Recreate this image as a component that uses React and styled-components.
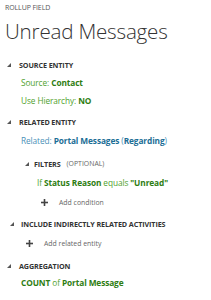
import React from "react";
import styled, { createGlobalStyle } from "styled-components";

const GlobalStyle = createGlobalStyle`
  body {
    margin: 0;
    background: #ffffff;
    font-family: "Open Sans", "Noto Sans", sans-serif;
  }
`;

const Page = styled.div`
  width: 211px;
  height: 300px;
  overflow: hidden;
  padding: 3px 0 0 5px;
  box-sizing: border-box;
`;

const Caption = styled.div`
  font-size: 7px;
  color: #555555;
  height: 9px;
  line-height: 9px;
  letter-spacing: -0.1px;
`;

const Title = styled.h1`
  margin: 4px 0 0;
  font-size: 20.6px;
  font-weight: 300;
  color: #333333;
  height: 30px;
  line-height: 30px;
  letter-spacing: -0.2px;
`;

const Row = styled.div`
  display: flex;
  align-items: center;
  height: 14px;
  margin-top: ${(p) => p.$mt || 4}px;
  padding-left: ${(p) => p.$indent || 0}px;
  white-space: nowrap;
`;

const Arrow = styled.span`
  display: inline-flex;
  width: ${(p) => p.$gap || 14}px;
  padding-left: 2px;
  box-sizing: border-box;
`;

const Heading = styled.span`
  font-size: 7.2px;
  font-weight: 700;
  color: #333333;
  letter-spacing: -0.1px;
`;

const Optional = styled.span`
  font-size: 6.9px;
  color: #666666;
  margin-left: 6px;
`;

const Line = styled.span`
  font-size: 8.3px;
  color: ${(p) => (p.$blue ? "#4a90b8" : "#4f9f2e")};
  letter-spacing: -0.1px;
`;

const Strong = styled.b`
  font-weight: 700;
  color: ${(p) => (p.$blue ? "#1c6e96" : "#2e7d12")};
`;

const Add = styled.span`
  font-size: 6.9px;
  color: #666666;
  margin-left: ${(p) => p.$gap || 11}px;
`;

const Triangle = () => (
  <svg width="4" height="4" viewBox="0 0 4 4">
    <polygon points="4,0 4,4 0,4" fill="#555555" />
  </svg>
);

const Plus = () => (
  <svg width="7" height="7" viewBox="0 0 7 7">
    <rect x="2.7" y="0" width="1.6" height="7" fill="#444444" />
    <rect x="0" y="2.7" width="7" height="1.6" fill="#444444" />
  </svg>
);

export default function App() {
  return (
    <Page>
      <GlobalStyle />
      <Caption>ROLLUP FIELD</Caption>
      <Title>Unread Messages</Title>

      <Row $mt={11.5}>
        <Arrow><Triangle /></Arrow>
        <Heading>SOURCE ENTITY</Heading>
      </Row>
      <Row $mt={4} $indent={16}>
        <Line>
          Source: <Strong>Contact</Strong>
        </Line>
      </Row>
      <Row $mt={3.5} $indent={16}>
        <Line>
          Use Hierarchy: <Strong>NO</Strong>
        </Line>
      </Row>

      <Row $mt={7.5}>
        <Arrow><Triangle /></Arrow>
        <Heading>RELATED ENTITY</Heading>
      </Row>
      <Row $mt={4.5} $indent={16}>
        <Line $blue>
          Related: <Strong $blue>Portal Messages</Strong> (<Strong $blue>Regarding</Strong>)
        </Line>
      </Row>

      <Row $mt={9.5} $indent={18}>
        <Arrow $gap={11}><Triangle /></Arrow>
        <Heading>FILTERS</Heading>
        <Optional>(OPTIONAL)</Optional>
      </Row>
      <Row $mt={4.5} $indent={32}>
        <Line>
          If <Strong>Status Reason</Strong> equals <Strong>"Unread"</Strong>
        </Line>
      </Row>
      <Row $mt={6.5} $indent={36}>
        <Plus />
        <Add>Add condition</Add>
      </Row>

      <Row $mt={7} $indent={3}>
        <Arrow $gap={13}><Triangle /></Arrow>
        <Heading>INCLUDE INDIRECTLY RELATED ACTIVITIES</Heading>
      </Row>
      <Row $mt={6} $indent={21}>
        <Plus />
        <Add>Add related entity</Add>
      </Row>

      <Row $mt={8}>
        <Arrow><Triangle /></Arrow>
        <Heading>AGGREGATION</Heading>
      </Row>
      <Row $mt={3} $indent={16}>
        <Line>
          <Strong>COUNT</Strong> of <Strong>Portal Message</Strong>
        </Line>
      </Row>
    </Page>
  );
}
